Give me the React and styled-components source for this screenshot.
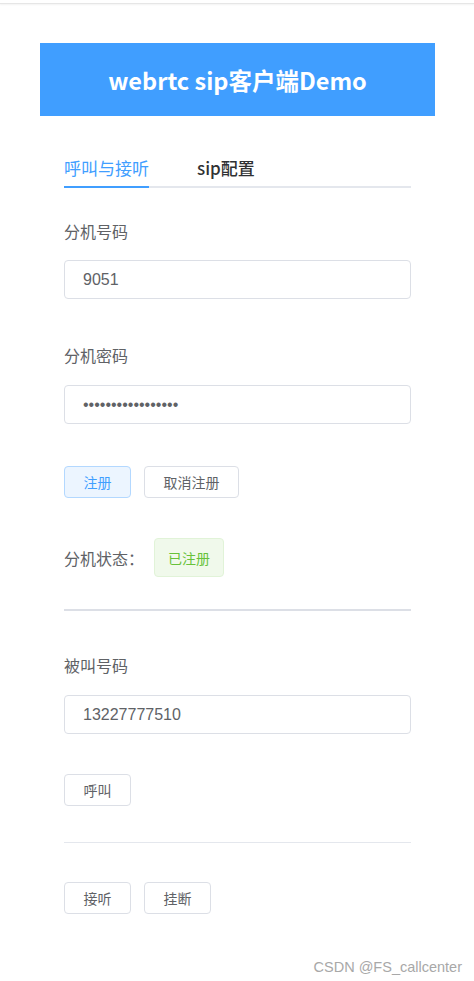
import React from "react";
import styled, { createGlobalStyle } from "styled-components";

const GlobalStyle = createGlobalStyle`
  body {
    margin: 0;
    background: #fff;
    font-family: "Noto Sans CJK SC", "Liberation Sans", sans-serif;
  }
`;

const TopLine = styled.div`
  height: 3px;
  border-bottom: 1px solid #e6e6e6;
  box-shadow: 0 1px 2px rgba(0, 0, 0, 0.05);
`;

const Page = styled.div`
  width: 395px;
  margin-left: 40px;
  padding-top: 39px;
`;

const Header = styled.div`
  height: 73px;
  background: #409eff;
  color: #fff;
  font-size: 23.5px;
  font-weight: 700;
  display: flex;
  align-items: center;
  justify-content: center;
`;

const Body = styled.div`
  padding: 0 24px;
`;

const Tabs = styled.div`
  margin-top: 34px;
  display: flex;
  gap: 48px;
  border-bottom: 2px solid #e4e7ed;
`;

const Tab = styled.div`
  height: 36px;
  line-height: 36px;
  font-size: 17px;
  color: ${(p) => (p.$active ? "#409eff" : "#303133")};
  font-weight: ${(p) => (p.$active ? 400 : 500)};
  box-shadow: ${(p) => (p.$active ? "0 2px 0 #409eff" : "none")};
`;

const Label = styled.div`
  margin-top: ${(p) => p.$top}px;
  font-size: 16px;
  line-height: 24px;
  color: #606266;
`;

const Input = styled.input`
  display: block;
  box-sizing: border-box;
  width: 100%;
  height: 39px;
  margin-top: ${(p) => p.$top || 17}px;
  padding: 0 18px;
  border: 1px solid #dcdfe6;
  border-radius: 4px;
  font-family: "Liberation Sans", sans-serif;
  font-size: 16px;
  color: #606266;
  outline: none;
  background: #fff;
`;

const ButtonRow = styled.div`
  margin-top: ${(p) => p.$top}px;
  display: flex;
  gap: 13px;
`;

const Button = styled.button`
  height: 32px;
  padding: 0 18.5px;
  border-radius: 4px;
  border: 1px solid ${(p) => (p.$primary ? "#b3d8ff" : "#dcdfe6")};
  background: ${(p) => (p.$primary ? "#ecf5ff" : "#fff")};
  color: ${(p) => (p.$primary ? "#409eff" : "#606266")};
  font-family: "Noto Sans CJK SC", sans-serif;
  font-size: 14px;
  cursor: pointer;
`;

const StatusRow = styled.div`
  margin-top: 40px;
  display: flex;
  align-items: center;
  gap: 10px;
  font-size: 16px;
  color: #606266;
`;

const Tag = styled.span`
  height: 39px;
  box-sizing: border-box;
  display: inline-flex;
  align-items: center;
  padding: 0 13px;
  border: 1px solid #e1f3d8;
  border-radius: 4px;
  background: #f0f9eb;
  color: #67c23a;
  font-size: 14px;
`;

const Divider = styled.div`
  margin-top: ${(p) => p.$top}px;
  height: ${(p) => p.$size}px;
  background: ${(p) => p.$color};
`;

const Watermark = styled.div`
  margin-top: 45px;
  padding-right: 12px;
  text-align: right;
  font-family: "Liberation Sans", sans-serif;
  font-size: 14.5px;
  color: #a8a8a8;
`;

export default function App() {
  return (
    <>
      <GlobalStyle />
      <TopLine />
      <Page>
        <Header>webrtc sip客户端Demo</Header>
        <Body>
          <Tabs>
            <Tab $active>呼叫与接听</Tab>
            <Tab>sip配置</Tab>
          </Tabs>

          <Label $top={31}>分机号码</Label>
          <Input defaultValue="9051" />

          <Label $top={44}>分机密码</Label>
          <Input $top={18} type="password" defaultValue="12345678901234567" />

          <ButtonRow $top={42}>
            <Button $primary>注册</Button>
            <Button>取消注册</Button>
          </ButtonRow>

          <StatusRow>
            分机状态：<Tag>已注册</Tag>
          </StatusRow>

          <Divider $top={32} $size={2} $color="#dcdfe6" />

          <Label $top={42}>被叫号码</Label>
          <Input $top={18} defaultValue="13227777510" />

          <ButtonRow $top={40}>
            <Button>呼叫</Button>
          </ButtonRow>

          <Divider $top={36} $size={1} $color="#e4e7ed" />

          <ButtonRow $top={39}>
            <Button>接听</Button>
            <Button>挂断</Button>
          </ButtonRow>
        </Body>
      </Page>
      <Watermark>CSDN @FS_callcenter</Watermark>
    </>
  );
}
